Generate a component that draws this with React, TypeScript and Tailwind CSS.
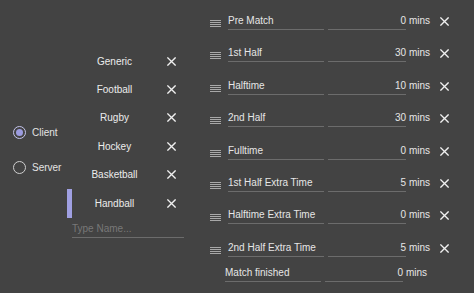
import React from 'react';

const SPORTS = ['Generic', 'Football', 'Rugby', 'Hockey', 'Basketball', 'Handball'];

const PERIODS = [
  { name: 'Pre Match', mins: 0 },
  { name: '1st Half', mins: 30 },
  { name: 'Halftime', mins: 10 },
  { name: '2nd Half', mins: 30 },
  { name: 'Fulltime', mins: 0 },
  { name: '1st Half Extra Time', mins: 5 },
  { name: 'Halftime Extra Time', mins: 0 },
  { name: '2nd Half Extra Time', mins: 5 },
];

const font = { fontFamily: '"Liberation Sans", Arial, sans-serif' };

function Cross({ className = '' }: { className?: string }) {
  return (
    <svg viewBox="0 0 10 10" className={`w-[9px] h-[9px] ${className}`}>
      <path d="M1 1 L9 9 M9 1 L1 9" stroke="#f0f0f0" strokeWidth="1.5" strokeLinecap="square" />
    </svg>
  );
}

function Handle() {
  return (
    <svg viewBox="0 0 11 8" className="w-[11px] h-[8px] mt-[5px]">
      {[0.5, 2.5, 4.5, 6.5].map((y) => (
        <line key={y} x1="0" y1={y} x2="11" y2={y} stroke="#a8a8a8" strokeWidth="1" />
      ))}
    </svg>
  );
}

function Radio({ label, checked }: { label: string; checked?: boolean }) {
  return (
    <div className="flex items-center gap-[6px] h-[14px]">
      <div
        className={`w-[13px] h-[13px] rounded-full border-[1.5px] flex items-center justify-center ${
          checked ? 'border-[#c4c4ec]' : 'border-[#cfcfcf]'
        }`}
      >
        {checked && <div className="w-[7px] h-[7px] rounded-full bg-[#9c9ce0]" />}
      </div>
      <span className="text-[10px] text-[#e4e4e4]">{label}</span>
    </div>
  );
}

function PeriodRow({ name, mins, removable = true }: { name: string; mins: number; removable?: boolean }) {
  return (
    <div className="h-[32.4px] shrink-0 flex items-start">
      {removable ? <div className="w-[23px] pl-[5px]"><Handle /></div> : <div className="w-[20px]" />}
      <div className="w-[96px] h-[15px] border-b border-[#6c6c6c] text-[10px] text-[#e6e6e6] leading-[11px]">
        {name}
      </div>
      <div className="w-[78px] ml-[4px] h-[15px] border-b border-[#6c6c6c] text-[10px] text-[#e6e6e6] leading-[11px] text-right">
        {mins}
      </div>
      <div className="w-[28px] pl-[3px] text-[10px] text-[#e6e6e6] leading-[11px]">mins</div>
      {removable && (
        <div className="ml-[6px] mt-[2px]">
          <Cross />
        </div>
      )}
    </div>
  );
}

export default function App() {
  return (
    <div className="w-[474px] h-[293px] bg-[#434343] flex overflow-hidden" style={font}>
      {/* connection type */}
      <div className="w-[64px] pl-[13px] pt-[125px] flex flex-col gap-[21px]">
        <Radio label="Client" checked />
        <Radio label="Server" />
      </div>

      {/* sports */}
      <div className="w-[136px] pt-[47px] flex flex-col">
        {SPORTS.map((s) => (
          <div key={s} className="h-[28.4px] shrink-0 flex items-center">
            <div className={`w-[5px] h-[29px] ml-[3px] ${s === 'Handball' ? 'bg-[#a0a0e2]' : ''}`} />
            <div className="w-[85px] text-center text-[10px] text-[#ececec]">{s}</div>
            <div className="w-[12px] ml-[8px] flex justify-center">
              <Cross />
            </div>
          </div>
        ))}
        <div className="ml-[8px] mt-[6px] w-[112px] h-[15px] border-b border-[#6c6c6c] text-[10px] text-[#787878] leading-[11px]">
          Type Name...
        </div>
      </div>

      {/* periods */}
      <div className="flex-1 pt-[15px] pl-[5px] flex flex-col">
        {PERIODS.map((p) => (
          <PeriodRow key={p.name} name={p.name} mins={p.mins} />
        ))}
        <div className="-mt-[7px]">
          <PeriodRow name="Match finished" mins={0} removable={false} />
        </div>
      </div>
    </div>
  );
}
